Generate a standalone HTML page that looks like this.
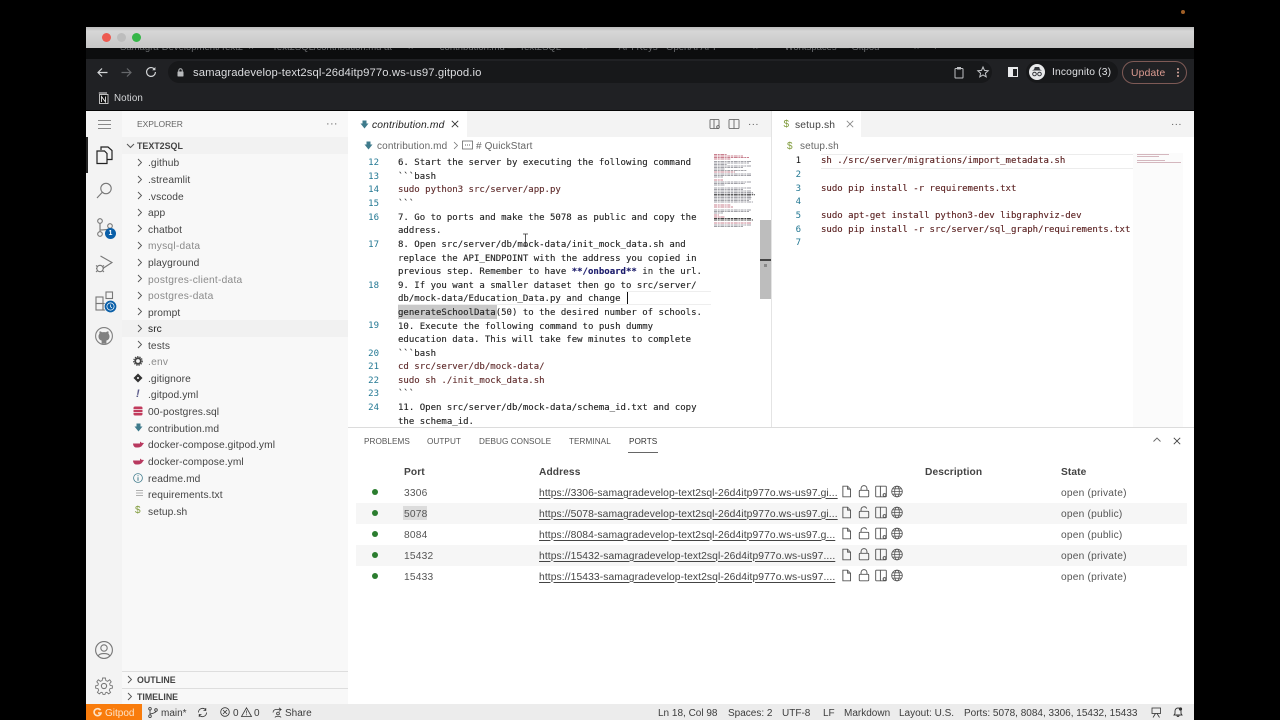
<!DOCTYPE html>
<html lang="en">
<head>
<meta charset="utf-8">
<title>Gitpod contribution.md</title>
<style>
html,body{margin:0;padding:0;width:1280px;height:720px;overflow:hidden;background:#000;}
body{position:relative;font-family:"Liberation Sans",sans-serif;color:#333;}
#a{position:absolute;left:0;top:0;width:1280px;height:720px;filter:blur(.35px);}
.b{position:absolute;}
.t{position:absolute;white-space:pre;line-height:14px;}
svg{position:absolute;overflow:visible;}
.f{font-size:10.2px;letter-spacing:.1px;color:#444;margin-top:-5.5px;left:148px;}
.d{color:#8a8a8a;letter-spacing:.25px;}
.c{position:absolute;left:137px;}
.m{font-family:"DejaVu Sans Mono","Liberation Mono",monospace;font-size:9.03px;color:#222;margin-top:-6px;left:398px;-webkit-text-stroke:.12px currentColor;}
.r{color:#5e2a2a;}
.n{font-family:"DejaVu Sans Mono","Liberation Mono",monospace;font-size:9.03px;color:#237893;margin-top:-6px;width:30px;text-align:right;left:349px;}
.s{font-family:"DejaVu Sans Mono","Liberation Mono",monospace;font-size:9.03px;color:#5a2020;margin-top:-6px;left:821px;-webkit-text-stroke:.12px currentColor;}
.n2{font-family:"DejaVu Sans Mono","Liberation Mono",monospace;font-size:9.03px;color:#237893;margin-top:-6px;width:12px;text-align:right;left:789px;}
.pt{font-size:8.2px;letter-spacing:.05px;color:#555;top:434.5px;}
.h{font-size:10.2px;font-weight:bold;letter-spacing:.1px;color:#444;top:465.5px;}
.p{font-size:10.2px;letter-spacing:.2px;color:#555;left:404px;margin-top:-5.5px;}
.l{font-size:10.3px;letter-spacing:.09px;color:#444;left:539px;margin-top:-5.5px;width:300px;text-decoration:underline;text-decoration-thickness:.6px;text-underline-offset:1.5px;}
.e{font-size:10.2px;letter-spacing:.2px;color:#555;left:1061px;margin-top:-5.5px;}
.dot{position:absolute;left:372px;width:6px;height:6px;border-radius:50%;background:#2b7d2f;}
.sb{font-size:10px;color:#3c3c3c;top:706.5px;letter-spacing:0;}
.ic{fill:none;stroke:#555;stroke-width:.8;}
.ai{fill:none;stroke:#777;stroke-width:1.1;}
.ri{transform:scale(1.18);transform-origin:center;}
</style>
</head>
<body>
<div id="a">
<!-- window chrome -->
<div class="b" style="left:86px;top:27px;width:1108px;height:21px;background:linear-gradient(#bdbdbd,#d6d6d6 20%,#c6c6c6);"></div>
<div class="b" style="left:102px;top:33px;width:9px;height:9px;border-radius:50%;background:#ed5a50;"></div>
<div class="b" style="left:117px;top:33px;width:9px;height:9px;border-radius:50%;background:#bdbdbd;"></div>
<div class="b" style="left:132px;top:33px;width:9px;height:9px;border-radius:50%;background:#35b648;"></div>
<div class="b" style="left:86px;top:48px;width:1108px;height:11px;background:#0c0d0e;"></div>
<div class="t" style="left:120px;top:40.500px;font-size:9.500px;color:#6a6c6f;clip-path:inset(7.500px 0 0 0);">Samagra-Development/Text2  ×       Text2SQL/contribution.md at      ×          contribution.md — Text2SQL        ×            API Keys - OpenAI API              ×          Workspaces — Gitpod             ×     +</div>
<div class="b" style="left:86px;top:59px;width:1108px;height:51px;background:#202124;"></div>
<div class="b" style="left:86px;top:110px;width:1108px;height:1px;background:#050505;"></div>
<div class="b" style="left:168px;top:61px;width:824px;height:22px;border-radius:11px;background:#17181a;"></div>
<svg style="left:96px;top:66px" width="13" height="13" viewBox="0 0 13 13"><path d="M11.500 6.500H2M6 2.500L2 6.500L6 10.500" fill="none" stroke="#d4d6d8" stroke-width="1.2"/></svg>
<svg style="left:120px;top:66px" width="13" height="13" viewBox="0 0 13 13"><path d="M1.500 6.500H11M7 2.500L11 6.500L7 10.500" fill="none" stroke="#66686b" stroke-width="1.2"/></svg>
<svg style="left:145px;top:66px" width="12" height="12" viewBox="0 0 12 12"><path d="M9.700 3.600A4.400 4.400 0 1 0 10.400 6" fill="none" stroke="#d4d6d8" stroke-width="1.2"/><path d="M10.400 1V4.200H7.200" fill="#d4d6d8"/></svg>
<svg style="left:177px;top:68px" width="7" height="9" viewBox="0 0 7 9"><rect x="0.5" y="3.500" width="6" height="5" rx=".6" fill="#b9bbbd"/><path d="M1.800 3.500V2.400A1.700 1.700 0 0 1 5.200 2.400V3.500" fill="none" stroke="#b9bbbd"/></svg>
<div class="t" style="left:193px;top:66px;font-size:11.300px;letter-spacing:.1px;color:#dcdde0;">samagradevelop-text2sql-26d4itp977o.ws-us97.gitpod.io</div>
<svg style="left:953px;top:66px" width="12" height="13" viewBox="0 0 12 13"><rect x="2" y="2.500" width="8" height="9.500" rx=".8" fill="none" stroke="#bfc1c4"/><rect x="4" y="1" width="4" height="2.500" fill="#bfc1c4"/></svg>
<svg style="left:977px;top:66px" width="12" height="12" viewBox="0 0 12 12"><path d="M6 1L7.500 4.400L11.200 4.800L8.400 7.200L9.200 10.800L6 8.900L2.800 10.800L3.600 7.200L.8 4.800L4.500 4.400Z" fill="none" stroke="#c4c6c9"/></svg>
<div class="b" style="left:1008px;top:67px;width:10px;height:10px;background:#e9eaec;"></div>
<div class="b" style="left:1013px;top:69px;width:4px;height:7px;background:#202124;"></div>
<div class="b" style="left:1026px;top:61px;width:92px;height:22px;border-radius:11px;background:#17181a;"></div>
<svg style="left:1029px;top:64px" width="16" height="16" viewBox="0 0 16 16"><circle cx="8" cy="8" r="8" fill="#e8e9eb"/><path d="M5 5.500L5.800 3H10.200L11 5.500L13 6.500H3Z" fill="#33353a"/><circle cx="5.500" cy="10" r="1.800" fill="none" stroke="#33353a"/><circle cx="10.500" cy="10" r="1.800" fill="none" stroke="#33353a"/></svg>
<div class="t" style="left:1052px;top:66px;font-size:10.300px;letter-spacing:.15px;color:#dfe0e3;">Incognito (3)</div>
<div class="b" style="left:1122px;top:61px;width:63px;height:21px;border:1px solid #7e5a56;border-radius:12px;box-sizing:content-box;"></div>
<div class="t" style="left:1131px;top:66.500px;font-size:10.300px;letter-spacing:.2px;color:#dd9c92;">Update</div>
<div class="b" style="left:1177px;top:68px;width:2px;height:2px;background:#d9a89f;box-shadow:0 3.500px 0 #d9a89f,0 7px 0 #d9a89f;border-radius:50%;"></div>
<svg style="left:98px;top:92px" width="11" height="12" viewBox="0 0 11 12"><rect x="1.500" y="2.500" width="8.500" height="9" fill="#111" stroke="#e8e8e8" stroke-width=".8"/><path d="M.8 1H9" stroke="#e8e8e8"/><path d="M3.500 10V4.500L7.500 10V4.500" fill="none" stroke="#e8e8e8" stroke-width=".9"/></svg>
<div class="t" style="left:114px;top:92px;font-size:9.800px;letter-spacing:.1px;color:#d4d6d8;">Notion</div>
<div class="b" style="left:1181px;top:10px;width:4px;height:4px;border-radius:50%;background:#a05f26;"></div>

<!-- vscode base -->
<div class="b" style="left:86px;top:111px;width:1108px;height:593px;background:#fff;"></div>
<div class="b" style="left:86px;top:111px;width:36px;height:593px;background:#f3f3f3;"></div>
<div class="b" style="left:122px;top:111px;width:226px;height:593px;background:#f8f8f8;"></div>
<div class="b" style="left:348px;top:111px;width:846px;height:26px;background:#f3f3f3;"></div>
<div class="b" style="left:348px;top:111px;width:119px;height:26px;background:#fff;"></div>
<div class="b" style="left:771px;top:111px;width:90px;height:26px;background:#fff;"></div>
<div class="b" style="left:771px;top:111px;width:1px;height:317px;background:#e4e4e4;"></div>

<!-- activity bar -->
<div class="b" style="left:98px;top:120px;width:13px;height:1px;background:#888;box-shadow:0 4px 0 #888,0 8px 0 #888;"></div>
<div class="b" style="left:86px;top:137px;width:1.500px;height:36px;background:#222;"></div>
<svg style="left:96px;top:146px" width="17" height="19" viewBox="0 0 17 19"><path d="M5 4V1H12L16 4.500V13.500H11" fill="none" stroke="#222" stroke-width="1.2"/><path d="M1 5H8.500L11 7.500V17.500H1Z" fill="#f3f3f3" stroke="#222" stroke-width="1.2"/></svg>
<svg class="ai" style="left:96px;top:182px" width="17" height="17" viewBox="0 0 17 17"><circle cx="10" cy="6.500" r="5.200"/><path d="M6.200 10.400L1 16"/></svg>
<svg class="ai" style="left:96px;top:218px" width="18" height="20" viewBox="0 0 18 20"><circle cx="4" cy="3" r="2.300"/><circle cx="4" cy="16" r="2.300"/><circle cx="14" cy="8" r="2.300"/><path d="M4 5.300V13.700M4 12C8 12 12.500 12 14 10.300"/></svg>
<div class="b" style="left:105px;top:228px;width:11px;height:11px;border-radius:50%;background:#0a5fa8;color:#fff;font-size:7px;font-weight:bold;line-height:11px;text-align:center;">1</div>
<svg class="ai" style="left:95px;top:255px" width="18" height="19" viewBox="0 0 18 19"><path d="M5.500 1L17 7.500L8.500 13"/><circle cx="5" cy="13.500" r="3.200"/><path d="M1 10.500L2.700 11.700M1 13.500H2M1 17L2.700 15.500M9 10.500L7.300 11.700M9 13.500H8M9 17L7.300 15.500"/></svg>
<svg class="ai" style="left:95px;top:291px" width="20" height="20" viewBox="0 0 20 20"><rect x="1" y="6" width="7" height="6.500"/><rect x="1" y="12.500" width="7" height="6.500"/><rect x="8" y="12.500" width="6" height="6.500"/><rect x="11" y="1" width="6.500" height="6.500"/></svg>
<svg style="left:104px;top:300px" width="13" height="13" viewBox="0 0 13 13"><circle cx="6.500" cy="6.500" r="6.200" fill="#0a5fa8" stroke="#f3f3f3" stroke-width=".7"/><circle cx="6.500" cy="6.500" r="3.600" fill="none" stroke="#fff" stroke-width=".7"/><path d="M6.500 4.500V6.800L8 7.800" fill="none" stroke="#fff" stroke-width=".7"/></svg>
<svg style="left:95px;top:327px" width="18" height="18" viewBox="0 0 18 18"><circle cx="9" cy="9" r="8.400" fill="none" stroke="#808080" stroke-width="1.1"/><path d="M6.600 16.600V13.500C5 13.200 3.300 11.900 3.500 9C3.600 8 4 7.200 4.500 6.700C4.300 6 4.400 5 4.700 4.300C5.600 4.300 6.400 4.800 7 5.300C8.300 5 9.700 5 11 5.300C11.600 4.800 12.400 4.300 13.300 4.300C13.600 5 13.700 6 13.500 6.700C14 7.200 14.400 8 14.500 9C14.700 11.900 13 13.200 11.400 13.500V16.600Z" fill="#808080"/></svg>
<svg class="ai" style="left:95px;top:641px" width="18" height="18" viewBox="0 0 18 18"><circle cx="9" cy="9" r="8.400"/><circle cx="9" cy="7" r="3.200"/><path d="M3.300 14.800C4.500 11.800 13.500 11.800 14.700 14.800"/></svg>
<svg class="ai" style="left:95px;top:677px" width="18" height="18" viewBox="0 0 18 18"><circle cx="9" cy="9" r="2.600"/><path d="M7.600 1H10.400L10.800 3.500L12.600 4.300L14.700 2.800L16.200 4.800L14.600 6.700L15.100 8.300L17.400 8.900V11.100L15 11.600L14.300 13.300L15.600 15.400L13.700 16.900L11.800 15.300L10.400 15.800L10 17.400H8L7.600 15.800L6.200 15.300L4.300 16.900L2.400 15.400L3.700 13.300L3 11.600L.6 11.100V8.900L2.900 8.300L3.400 6.700L1.800 4.800L3.300 2.800L5.400 4.300L7.200 3.500Z" stroke-width=".9"/></svg>

<!-- sidebar -->
<div class="t" style="left:137px;top:117px;font-size:8.500px;letter-spacing:-.05px;color:#666;">EXPLORER</div>
<div class="t" style="left:326px;top:117px;font-size:11px;color:#666;letter-spacing:.3px;">···</div>
<div class="b" style="left:122px;top:137px;width:226px;height:17px;background:#f2f2f2;"></div>
<div class="b" style="left:122px;top:320px;width:226px;height:17px;background:#f1f1f1;"></div>
<svg style="left:126px;top:143px" width="9" height="6" viewBox="0 0 9 6"><path d="M1 1L4.500 4.500L8 1" fill="none" stroke="#555"/></svg>
<div class="t" style="left:137px;top:138.500px;font-size:8.900px;font-weight:bold;letter-spacing:0;color:#444;">TEXT2SQL</div>

<svg style="left:0;top:0" width="1" height="1"><defs><path id="ch" d="M1 1L4.500 4.500L1 8" fill="none" stroke="#555" stroke-width=".9"/></defs></svg>
<svg class="c" style="top:158px" width="6" height="9"><use href="#ch"/></svg><div class="t f" style="top:162px">.github</div>
<svg class="c" style="top:175px" width="6" height="9"><use href="#ch"/></svg><div class="t f" style="top:179px">.streamlit</div>
<svg class="c" style="top:191px" width="6" height="9"><use href="#ch"/></svg><div class="t f" style="top:196px">.vscode</div>
<svg class="c" style="top:208px" width="6" height="9"><use href="#ch"/></svg><div class="t f" style="top:212px">app</div>
<svg class="c" style="top:224px" width="6" height="9"><use href="#ch"/></svg><div class="t f" style="top:229px">chatbot</div>
<svg class="c" style="top:241px" width="6" height="9"><use href="#ch"/></svg><div class="t f d" style="top:245px">mysql-data</div>
<svg class="c" style="top:258px" width="6" height="9"><use href="#ch"/></svg><div class="t f" style="top:262px">playground</div>
<svg class="c" style="top:274px" width="6" height="9"><use href="#ch"/></svg><div class="t f d" style="top:279px">postgres-client-data</div>
<svg class="c" style="top:291px" width="6" height="9"><use href="#ch"/></svg><div class="t f d" style="top:295px">postgres-data</div>
<svg class="c" style="top:307px" width="6" height="9"><use href="#ch"/></svg><div class="t f" style="top:312px">prompt</div>
<svg class="c" style="top:324px" width="6" height="9"><use href="#ch"/></svg><div class="t f" style="top:328px;color:#222;">src</div>
<svg class="c" style="top:340px" width="6" height="9"><use href="#ch"/></svg><div class="t f" style="top:345px">tests</div>

<svg style="left:133px;top:356px" width="10" height="10" viewBox="0 0 10 10"><circle cx="5" cy="5" r="2.800" fill="none" stroke="#444" stroke-width="1.800"/><circle cx="5" cy="5" r="4.300" fill="none" stroke="#444" stroke-width="1.100" stroke-dasharray="1.400 1"/></svg>
<div class="t f d" style="top:361px">.env</div>
<svg style="left:133px;top:373px" width="10" height="10" viewBox="0 0 10 10"><path d="M5 .5L9.500 5L5 9.500L.5 5Z" fill="#333"/><circle cx="5" cy="5" r="1" fill="#fff"/></svg>
<div class="t f" style="top:378px">.gitignore</div>
<div class="t" style="left:136px;top:387px;font-size:11px;font-style:italic;font-weight:bold;color:#5a5a8a;">!</div>
<div class="t f" style="top:394px">.gitpod.yml</div>
<svg style="left:133px;top:406px" width="10" height="10" viewBox="0 0 10 10"><rect x=".5" y=".5" width="9" height="9" rx="1.500" fill="#c13a5c"/><path d="M.5 3.500H9.500M.5 6.500H9.500" stroke="#f8f8f8" stroke-width=".8"/></svg>
<div class="t f" style="top:411px">00-postgres.sql</div>
<svg style="left:134px;top:423px" width="9" height="9" viewBox="0 0 9 9"><path d="M2.500 .5H6.500V3.500H8.500L4.500 8.500L.5 3.500H2.500Z" fill="#3f7b8c"/></svg>
<div class="t f" style="top:428px">contribution.md</div>
<svg style="left:133px;top:440px" width="11" height="8" viewBox="0 0 11 8"><path d="M0 3.500H7V1.500L8.500 2.800L11 3L9.500 5C8.500 7 6 7.800 3 7.500C1 7.300 .2 5.500 0 3.500Z" fill="#b8395f"/></svg>
<div class="t f" style="top:444px">docker-compose.gitpod.yml</div>
<svg style="left:133px;top:457px" width="11" height="8" viewBox="0 0 11 8"><path d="M0 3.500H7V1.500L8.500 2.800L11 3L9.500 5C8.500 7 6 7.800 3 7.500C1 7.300 .2 5.500 0 3.500Z" fill="#b8395f"/></svg>
<div class="t f" style="top:461px">docker-compose.yml</div>
<svg style="left:133px;top:473px" width="10" height="10" viewBox="0 0 10 10"><circle cx="5" cy="5" r="4.400" fill="none" stroke="#3f7b8c" stroke-width=".8"/><path d="M5 4.200V7.800M5 2.200V3.200" stroke="#3f7b8c" stroke-width="1"/></svg>
<div class="t f" style="top:478px">readme.md</div>
<div class="b" style="left:136px;top:490px;width:7px;height:1px;background:#b0b0b0;box-shadow:0 2.500px 0 #b0b0b0,0 5px 0 #b0b0b0;"></div>
<div class="t f" style="top:494px">requirements.txt</div>
<div class="t" style="left:135px;top:504px;font-size:10px;color:#7f9a3a;">$</div>
<div class="t f" style="top:511px">setup.sh</div>

<div class="b" style="left:122px;top:671px;width:226px;height:1px;background:#dedede;"></div>
<div class="b" style="left:122px;top:688px;width:226px;height:1px;background:#dedede;"></div>
<svg style="left:127px;top:675px" width="6" height="9"><use href="#ch"/></svg>
<div class="t" style="left:137px;top:672.500px;font-size:8.800px;font-weight:bold;letter-spacing:0;color:#444;">OUTLINE</div>
<svg style="left:127px;top:692px" width="6" height="9"><use href="#ch"/></svg>
<div class="t" style="left:137px;top:689.500px;font-size:8.800px;font-weight:bold;letter-spacing:0;color:#444;">TIMELINE</div>

<!-- editor 1 tabs -->
<svg style="left:360px;top:120px" width="9" height="9" viewBox="0 0 9 9"><path d="M2.500 .5H6.500V3.500H8.500L4.500 8.500L.5 3.500H2.500Z" fill="#3f7b8c"/></svg>
<div class="t" style="left:372px;top:118.500px;font-size:10.300px;font-style:italic;letter-spacing:.14px;color:#222;">contribution.md</div>
<svg style="left:451px;top:120px" width="8" height="8" viewBox="0 0 8 8"><path d="M.8 .8L7.200 7.200M7.200 .8L.8 7.200" stroke="#333" stroke-width=".9"/></svg>
<svg class="ic" style="left:709px;top:118px" width="12" height="12" viewBox="0 0 12 12"><rect x="1" y="1.500" width="9" height="9" rx=".8"/><path d="M5 1.500V10.500"/><circle cx="9" cy="9" r="1.300" fill="#fff"/></svg>
<svg class="ic" style="left:728px;top:118px" width="12" height="12" viewBox="0 0 12 12"><rect x="1" y="1.500" width="10" height="9" rx=".8"/><path d="M6 1.500V10.500"/></svg>
<div class="t" style="left:748px;top:118px;font-size:10px;color:#555;letter-spacing:.3px;">···</div>
<svg style="left:364px;top:141px" width="9" height="9" viewBox="0 0 9 9"><path d="M2.500 .5H6.500V3.500H8.500L4.500 8.500L.5 3.500H2.500Z" fill="#3f7b8c"/></svg>
<div class="t" style="left:377px;top:139.500px;font-size:10px;letter-spacing:.13px;color:#666;">contribution.md</div>
<svg style="left:453px;top:141px" width="6" height="9"><path d="M1 1L4.500 4.500L1 8" fill="none" stroke="#777" stroke-width=".8"/></svg>
<svg style="left:462px;top:140px" width="11" height="10" viewBox="0 0 11 10"><rect x=".5" y="1" width="10" height="8" fill="none" stroke="#666" stroke-width=".8"/><path d="M3 5H8" stroke="#666" stroke-dasharray="1 1"/></svg>
<div class="t" style="left:476px;top:139.500px;font-size:10px;letter-spacing:.13px;color:#666;"># QuickStart</div>

<!-- editor 1 -->
<div class="b" style="left:398px;top:305px;width:99px;height:13.500px;background:#c9c9c9;"></div>
<div class="b" style="left:626px;top:291px;width:85px;height:1px;background:#eee;"></div>
<div class="b" style="left:398px;top:304px;width:313px;height:1px;background:#eee;"></div>
<div class="b" style="left:627px;top:292px;width:1.200px;height:12px;background:#111;"></div>

<div class="t n" style="top:162px">12</div><div class="t m" style="top:162px">6. Start the server by executing the following command</div>
<div class="t n" style="top:176px">13</div><div class="t m" style="top:176px">&#96;&#96;&#96;bash</div>
<div class="t n" style="top:189px">14</div><div class="t m r" style="top:189px">sudo python3 src/server/app.py</div>
<div class="t n" style="top:203px">15</div><div class="t m" style="top:203px">&#96;&#96;&#96;</div>
<div class="t n" style="top:217px">16</div><div class="t m" style="top:217px">7. Go to ports and make the 5078 as public and copy the</div>
<div class="t m" style="top:230px">address.</div>
<div class="t n" style="top:244px">17</div><div class="t m" style="top:244px">8. Open src/server/db/mock-data/init_mock_data.sh and</div>
<div class="t m" style="top:257.500px">replace the API_ENDPOINT with the address you copied in</div>
<div class="t m" style="top:271px">previous step. Remember to have <b style="color:#1a1a6a">**/onboard**</b> in the url.</div>
<div class="t n" style="top:285px">18</div><div class="t m" style="top:285px">9. If you want a smaller dataset then go to src/server/</div>
<div class="t m" style="top:298px">db/mock-data/Education_Data.py and change</div>
<div class="t m" style="top:312px">generateSchoolData(50) to the desired number of schools.</div>
<div class="t n" style="top:325px">19</div><div class="t m" style="top:325.500px">10. Execute the following command to push dummy</div>
<div class="t m" style="top:339px">education data. This will take few minutes to complete</div>
<div class="t n" style="top:352.500px">20</div><div class="t m" style="top:352.500px">&#96;&#96;&#96;bash</div>
<div class="t n" style="top:366px">21</div><div class="t m r" style="top:366px">cd src/server/db/mock-data/</div>
<div class="t n" style="top:380px">22</div><div class="t m r" style="top:380px">sudo sh ./init_mock_data.sh</div>
<div class="t n" style="top:393px">23</div><div class="t m" style="top:393px">&#96;&#96;&#96;</div>
<div class="t n" style="top:407px">24</div><div class="t m" style="top:407px">11. Open src/server/db/mock-data/schema_id.txt and copy</div>
<div class="t m" style="top:420.500px">the schema_id.</div>
<svg style="left:522px;top:233px" width="7" height="14" viewBox="0 0 7 14"><path d="M1 1H6M3.500 1V13M1 13H6" stroke="#333" fill="none" stroke-width=".8"/></svg>

<!-- minimap 1 -->
<svg style="left:713px;top:153px" width="47" height="76" viewBox="0 0 47 76" fill="none" stroke-width="1" stroke-dasharray="3 .7 2 .7 4 .7 1.500 .7">
<path stroke="#c9808f" d="M1 1.500H14M1 3H30M1 4.500H36M1 6H18M1 19H22M1 27H10M1 52H18M1 54H20M1 62H6M1 64H12M1 70H38"/>
<path stroke="#a2a2a8" d="M1 8.500H38M1 10H36M1 11.500H14M1 13H38M1 14.500H30M1 16H12M1 17.500H34M1 21H38M1 22.500H38M1 24H10M1 29H38M1 30.500H32M1 32H12M1 35H38M1 36.500H30M1 38H38M1 39.500H40M1 41H41M1 43H38M1 44.500H39M1 46H38M1 47.500H36M1 49H40M1 57H38M1 58.500H36M1 60H10M1 72H38M1 73.500H30"/>
<path stroke="#444" d="M1 41.800H42M1 65.500H38M1 67H40"/>
</svg>
<div class="b" style="left:760px;top:220px;width:11px;height:79px;background:#bdbdbd;"></div>
<div class="b" style="left:760px;top:259px;width:11px;height:2px;background:#444;"></div>
<div class="b" style="left:764px;top:264px;width:3px;height:3px;background:#888;"></div>

<!-- editor 2 -->
<div class="t" style="left:783.500px;top:118px;font-size:10px;color:#7f9a3a;">$</div>
<div class="t" style="left:795px;top:118.500px;font-size:10.300px;letter-spacing:.15px;color:#444;">setup.sh</div>
<svg style="left:846px;top:120px" width="8" height="8" viewBox="0 0 8 8"><path d="M.8 .8L7.200 7.200M7.200 .8L.8 7.200" stroke="#888" stroke-width=".8"/></svg>
<div class="t" style="left:1171px;top:118px;font-size:10px;color:#555;letter-spacing:.3px;">···</div>
<div class="t" style="left:787px;top:140px;font-size:10px;color:#7f9a3a;">$</div>
<div class="t" style="left:800px;top:139.500px;font-size:10px;letter-spacing:.13px;color:#666;">setup.sh</div>
<div class="b" style="left:821px;top:153.500px;width:312px;height:13px;border-top:1px solid #ececec;border-bottom:1px solid #ececec;"></div>
<div class="t n2" style="top:160px;color:#111">1</div><div class="t s" style="top:160px">sh ./src/server/migrations/import_metadata.sh</div>
<div class="t n2" style="top:174px">2</div>
<div class="t n2" style="top:187.500px">3</div><div class="t s" style="top:187.500px">sudo pip install -r requirements.txt</div>
<div class="t n2" style="top:201px">4</div>
<div class="t n2" style="top:215px">5</div><div class="t s" style="top:215px">sudo apt-get install python3-dev libgraphviz-dev</div>
<div class="t n2" style="top:228.500px">6</div><div class="t s" style="top:228.500px">sudo pip install -r src/server/sql_graph/requirements.txt</div>
<div class="t n2" style="top:242px">7</div>
<div class="b" style="left:1133px;top:153px;width:50px;height:274px;background:#fbfbfb;"></div>
<svg style="left:1136px;top:154px" width="48" height="12" opacity=".65"><g fill="#b07a88"><rect x="1" y="0" width="32" height=".8"/><rect x="1" y="2" width="22" height=".8"/><rect x="1" y="6" width="28" height=".8"/><rect x="1" y="8" width="44" height=".8"/></g></svg>

<!-- panel -->
<div class="b" style="left:348px;top:427px;width:846px;height:1px;background:#dcdcdc;"></div>
<div class="t pt" style="left:364px;">PROBLEMS</div>
<div class="t pt" style="left:427px;">OUTPUT</div>
<div class="t pt" style="left:479px;">DEBUG CONSOLE</div>
<div class="t pt" style="left:569px;">TERMINAL</div>
<div class="t pt" style="left:629px;color:#333;">PORTS</div>
<div class="b" style="left:628px;top:452px;width:30px;height:1px;background:#666;"></div>
<svg style="left:1153px;top:437px" width="8" height="6"><path d="M.5 4.500L4 1L7.500 4.500" fill="none" stroke="#666" stroke-width=".9"/></svg>
<svg style="left:1173px;top:437px" width="8" height="8" viewBox="0 0 8 8"><path d="M.8 .8L7.200 7.200M7.200 .8L.8 7.200" stroke="#444" stroke-width=".9"/></svg>
<div class="t h" style="left:404px;">Port</div>
<div class="t h" style="left:539px;">Address</div>
<div class="t h" style="left:925px;">Description</div>
<div class="t h" style="left:1061px;">State</div>
<div class="b" style="left:356px;top:502.500px;width:831px;height:21px;background:#f6f6f6;"></div>
<div class="b" style="left:356px;top:544.500px;width:831px;height:21px;background:#f6f6f6;"></div>
<div class="b" style="left:403px;top:506px;width:24px;height:14px;background:#dcdcdc;"></div>

<svg style="left:0;top:0" width="1" height="1"><defs>
<g id="i1" fill="none" stroke="#555" stroke-width=".8"><path d="M1.500 1H5.500L8 3.500V10H1.500Z"/><path d="M5.500 1V3.500H8" fill="#bbb"/></g>
<g id="i2" fill="none" stroke="#555" stroke-width=".8"><rect x="1" y="4.500" width="8" height="5.500" rx=".6"/><path d="M2.500 4.500V3A2.500 2.500 0 0 1 7.500 3V4.500"/></g>
<g id="i3" fill="none" stroke="#555" stroke-width=".8"><rect x="1" y="4.500" width="8" height="5.500" rx=".6"/><path d="M2.500 4.500V3A2.500 2.500 0 0 1 7.300 2.200"/></g>
<g id="i4" fill="none" stroke="#555" stroke-width=".8"><rect x=".5" y="1" width="9" height="9" rx=".6"/><path d="M4.500 1V10"/><circle cx="8" cy="8.500" r="1.200" fill="#fff"/></g>
<g id="i5" fill="none" stroke="#555" stroke-width=".7"><circle cx="5" cy="5.500" r="4.500"/><ellipse cx="5" cy="5.500" rx="2" ry="4.500"/><path d="M.5 5.500H9.500M1.200 3.200H8.800M1.200 7.800H8.800"/></g>
</defs></svg>

<div class="dot" style="top:489px"></div><div class="t p" style="top:492px">3306</div><div class="t l" style="top:492px">https://3306-samagradevelop-text2sql-26d4itp977o.ws-us97.gi...</div><div class="t e" style="top:492px">open (private)</div>
<svg class="ri" style="left:842px;top:486px" width="10" height="11"><use href="#i1"/></svg><svg class="ri" style="left:859px;top:486px" width="10" height="11"><use href="#i2"/></svg><svg class="ri" style="left:876px;top:486px" width="10" height="11"><use href="#i4"/></svg><svg class="ri" style="left:892px;top:486px" width="10" height="11"><use href="#i5"/></svg>

<div class="dot" style="top:510px"></div><div class="t p" style="top:513px">5078</div><div class="t l" style="top:513px">https://5078-samagradevelop-text2sql-26d4itp977o.ws-us97.gi...</div><div class="t e" style="top:513px">open (public)</div>
<svg class="ri" style="left:842px;top:507px" width="10" height="11"><use href="#i1"/></svg><svg class="ri" style="left:859px;top:507px" width="10" height="11"><use href="#i3"/></svg><svg class="ri" style="left:876px;top:507px" width="10" height="11"><use href="#i4"/></svg><svg class="ri" style="left:892px;top:507px" width="10" height="11"><use href="#i5"/></svg>

<div class="dot" style="top:531px"></div><div class="t p" style="top:534px">8084</div><div class="t l" style="top:534px">https://8084-samagradevelop-text2sql-26d4itp977o.ws-us97.g...</div><div class="t e" style="top:534px">open (public)</div>
<svg class="ri" style="left:842px;top:528px" width="10" height="11"><use href="#i1"/></svg><svg class="ri" style="left:859px;top:528px" width="10" height="11"><use href="#i3"/></svg><svg class="ri" style="left:876px;top:528px" width="10" height="11"><use href="#i4"/></svg><svg class="ri" style="left:892px;top:528px" width="10" height="11"><use href="#i5"/></svg>

<div class="dot" style="top:552px"></div><div class="t p" style="top:555px">15432</div><div class="t l" style="top:555px">https://15432-samagradevelop-text2sql-26d4itp977o.ws-us97....</div><div class="t e" style="top:555px">open (private)</div>
<svg class="ri" style="left:842px;top:549px" width="10" height="11"><use href="#i1"/></svg><svg class="ri" style="left:859px;top:549px" width="10" height="11"><use href="#i2"/></svg><svg class="ri" style="left:876px;top:549px" width="10" height="11"><use href="#i4"/></svg><svg class="ri" style="left:892px;top:549px" width="10" height="11"><use href="#i5"/></svg>

<div class="dot" style="top:573px"></div><div class="t p" style="top:576px">15433</div><div class="t l" style="top:576px">https://15433-samagradevelop-text2sql-26d4itp977o.ws-us97....</div><div class="t e" style="top:576px">open (private)</div>
<svg class="ri" style="left:842px;top:570px" width="10" height="11"><use href="#i1"/></svg><svg class="ri" style="left:859px;top:570px" width="10" height="11"><use href="#i2"/></svg><svg class="ri" style="left:876px;top:570px" width="10" height="11"><use href="#i4"/></svg><svg class="ri" style="left:892px;top:570px" width="10" height="11"><use href="#i5"/></svg>

<!-- status bar -->
<div class="b" style="left:86px;top:704px;width:1108px;height:16px;background:#ececec;"></div>
<div class="b" style="left:86px;top:704px;width:56px;height:16px;background:#f97c0c;"></div>
<svg style="left:93px;top:708px" width="9" height="9" viewBox="0 0 9 9"><path d="M7.500 2.200A3.500 3.500 0 1 0 8 5H5" fill="none" stroke="#fde3c8" stroke-width="1.600"/></svg>
<div class="t sb" style="left:105px;color:#fde3c8;">Gitpod</div>
<svg style="left:148px;top:707px" width="10" height="11" viewBox="0 0 10 11"><circle cx="2" cy="1.800" r="1.300" fill="none" stroke="#333" stroke-width=".8"/><circle cx="2" cy="9.200" r="1.300" fill="none" stroke="#333" stroke-width=".8"/><circle cx="8" cy="3" r="1.300" fill="none" stroke="#333" stroke-width=".8"/><path d="M2 3V8M2 7C5 6.500 7.500 6 8 4.300" fill="none" stroke="#333" stroke-width=".8"/></svg>
<div class="t sb" style="left:161px;">main*</div>
<svg style="left:197px;top:707px" width="11" height="11" viewBox="0 0 11 11"><path d="M1.500 5.500A4 4 0 0 1 8.700 3M9.500 5.500A4 4 0 0 1 2.300 8" fill="none" stroke="#333" stroke-width=".8"/><path d="M8.800 1V3.500H6.500M2.200 10V7.500H4.500" fill="none" stroke="#333" stroke-width=".8"/></svg>
<svg style="left:220px;top:707px" width="10" height="10" viewBox="0 0 10 10"><circle cx="5" cy="5" r="4.300" fill="none" stroke="#333" stroke-width=".8"/><path d="M3 3L7 7M7 3L3 7" stroke="#333" stroke-width=".8"/></svg>
<div class="t sb" style="left:233px;">0</div>
<svg style="left:241px;top:707px" width="11" height="10" viewBox="0 0 11 10"><path d="M5.500 .8L10.500 9.500H.5Z" fill="none" stroke="#333" stroke-width=".8"/><path d="M5.500 3.500V6.500M5.500 7.300V8.300" stroke="#333" stroke-width=".7"/></svg>
<div class="t sb" style="left:254px;">0</div>
<svg style="left:272px;top:707px" width="11" height="11" viewBox="0 0 11 11"><path d="M1 5.500A3 3 0 0 1 4 2.500H9L7 .8M9 2.500L7 4.500" fill="none" stroke="#333" stroke-width=".8"/><circle cx="6" cy="6.500" r="1.400" fill="none" stroke="#333" stroke-width=".8"/><path d="M3 10.500C3.500 8.800 8.500 8.800 9 10.500" fill="none" stroke="#333" stroke-width=".8"/></svg>
<div class="t sb" style="left:285px;">Share</div>
<div class="t sb" style="left:658px;">Ln 18, Col 98</div>
<div class="t sb" style="left:728px;">Spaces: 2</div>
<div class="t sb" style="left:782px;">UTF-8</div>
<div class="t sb" style="left:823px;">LF</div>
<div class="t sb" style="left:844px;">Markdown</div>
<div class="t sb" style="left:899px;">Layout: U.S.</div>
<div class="t sb" style="left:964px;">Ports: 5078, 8084, 3306, 15432, 15433</div>
<svg style="left:1151px;top:707px" width="11" height="11" viewBox="0 0 11 11"><rect x="1" y="1" width="8.500" height="5.500" fill="none" stroke="#333" stroke-width=".8"/><path d="M4.500 6.500L2 10.500M6 6.500L8.500 10.500" stroke="#333" stroke-width=".8"/></svg>
<svg style="left:1173px;top:707px" width="10" height="11" viewBox="0 0 10 11"><path d="M1 8H9L8 6.500V4A3 3 0 0 0 2 4V6.500ZM4 8.500A1 1 0 0 0 6 8.500" fill="none" stroke="#333" stroke-width=".9"/><circle cx="7.500" cy="2" r="1.600" fill="#333"/></svg>
</div>
</body>
</html>
